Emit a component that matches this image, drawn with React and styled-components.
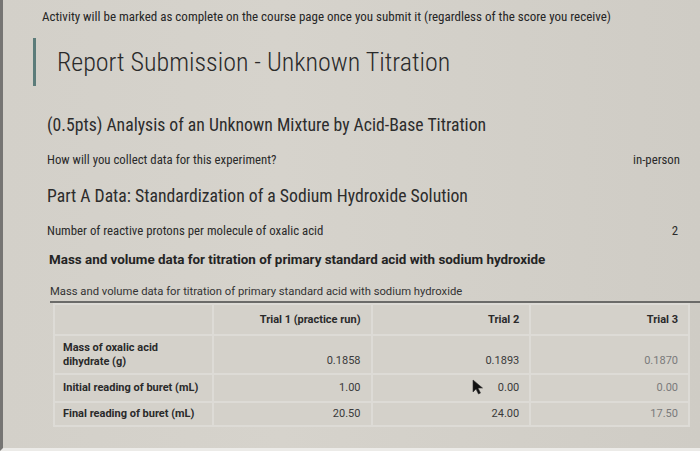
import React from "react";
import styled, { createGlobalStyle } from "styled-components";

const Global = createGlobalStyle`
  html, body { margin: 0; padding: 0; }
  body {
    width: 700px; height: 451px; overflow: hidden;
    font-family: "Roboto", "Liberation Sans", sans-serif;
    color: #2b2b2b;
  }
`;

const Screen = styled.div`
  position: relative;
  width: 700px;
  height: 451px;
  box-sizing: border-box;
  border-left: 3px solid #767573;
  border-bottom: 3px solid #ecebe8;
  background: linear-gradient(90deg, #d3d0c9 0%, #d6d3cc 40%, #cfccc5 100%);
  overflow: hidden;
`;

const Content = styled.div`
  display: flex;
  flex-direction: column;
  padding: 9px 20px 0 30px;
`;

const Notice = styled.div`
  margin-left: 9px;
  font-size: 13px;
  line-height: 16px;
  font-stretch: 85%;
  color: #262626;
`;

const TitleBlock = styled.div`
  display: flex;
  align-items: center;
  margin-top: 13px;
  height: 48px;
  border-left: 3px solid #5c7c7a;
`;

const Title = styled.h1`
  margin: 0 0 0 21px;
  font-size: 26px;
  font-weight: 300;
  font-stretch: 85%;
  color: #2a2a2a;
`;

const Heading = styled.h2`
  margin: ${p => p.$top}px 0 0 14px;
  font-size: 17.7px;
  line-height: 22px;
  font-weight: 400;
  font-stretch: 85%;
  color: #2c2c2c;
`;

const QRow = styled.div`
  display: flex;
  justify-content: space-between;
  align-items: center;
  margin: ${p => p.$top}px 0 0 14px;
  font-size: 12.8px;
  line-height: 16px;
  font-stretch: 85%;
  color: #2a2a2a;
`;

const Answer = styled.span`
  margin-right: ${p => p.$right || 0}px;
`;

const SubHeading = styled.h3`
  margin: 12px 0 0 16px;
  font-size: 13.4px;
  line-height: 18px;
  font-weight: 700;
  color: #242424;
`;

const Caption = styled.div`
  margin: 15px -20px 0 17px;
  padding-bottom: 1px;
  border-bottom: 2px solid #6b6b69;
  font-size: 11.25px;
  line-height: 16px;
  color: #333;
`;

const Table = styled.table`
  margin: 0 0 0 20px;
  width: 637px;
  border-collapse: separate;
  border-spacing: 2px;
  background: #dddbd6;
  font-size: 11px;
  table-layout: fixed;
`;

const Row = styled.tr`
  height: ${p => p.$h}px;
`;

const Cell = styled.td`
  background: #d4d1ca;
  padding: 0 ${p => (p.$label ? 8 : 10)}px ${p => (p.$bottom ? 5 : 0)}px;
  text-align: ${p => (p.$label ? "left" : "right")};
  vertical-align: ${p => (p.$bottom ? "bottom" : "middle")};
  font-weight: ${p => (p.$label ? 700 : 400)};
  color: ${p => (p.$faint ? "#7a7a7a" : p.$label ? "#2a2a2a" : "#3a3a3a")};
  line-height: 14px;
`;

const HeadCell = styled.th`
  background: #d4d1ca;
  padding: 0 10px;
  text-align: right;
  font-weight: 700;
  color: #2a2a2a;
`;

const Cursor = styled.svg`
  position: absolute;
  left: 469px;
  top: 379px;
`;

const rows = [
  { label: ["Mass of oxalic acid", "dihydrate (g)"], v: ["0.1858", "0.1893", "0.1870"], h: 37, bottom: true },
  { label: ["Initial reading of buret (mL)"], v: ["1.00", "0.00", "0.00"], h: 26 },
  { label: ["Final reading of buret (mL)"], v: ["20.50", "24.00", "17.50"], h: 22 },
];

export default function App() {
  return (
    <>
      <Global />
      <Screen>
        <Content>
          <Notice>
            Activity will be marked as complete on the course page once you submit it (regardless of the score you receive)
          </Notice>
          <TitleBlock>
            <Title>Report Submission - Unknown Titration</Title>
          </TitleBlock>
          <Heading $top={28}>(0.5pts) Analysis of an Unknown Mixture by Acid-Base Titration</Heading>
          <QRow $top={16}>
            <span>How will you collect data for this experiment?</span>
            <Answer>in-person</Answer>
          </QRow>
          <Heading $top={17}>Part A Data: Standardization of a Sodium Hydroxide Solution</Heading>
          <QRow $top={16}>
            <span>Number of reactive protons per molecule of oxalic acid</span>
            <Answer $right={2}>2</Answer>
          </QRow>
          <SubHeading>Mass and volume data for titration of primary standard acid with sodium hydroxide</SubHeading>
          <Caption>Mass and volume data for titration of primary standard acid with sodium hydroxide</Caption>
          <Table>
            <thead>
              <Row $h={29}>
                <HeadCell />
                <HeadCell>Trial 1 (practice run)</HeadCell>
                <HeadCell>Trial 2</HeadCell>
                <HeadCell>Trial 3</HeadCell>
              </Row>
            </thead>
            <tbody>
              {rows.map((r, i) => (
                <Row key={i} $h={r.h}>
                  <Cell $label>
                    {r.label.map((l, j) => (
                      <div key={j}>{l}</div>
                    ))}
                  </Cell>
                  {r.v.map((v, j) => (
                    <Cell key={j} $bottom={r.bottom} $faint={j === 2}>
                      {v}
                    </Cell>
                  ))}
                </Row>
              ))}
            </tbody>
          </Table>
        </Content>
        <Cursor width="12" height="16" viewBox="0 0 12 16">
          <path d="M1 1 L1 13 L4 10 L6.5 15 L8.5 14 L6 9 L10.5 9 Z" fill="#111" stroke="#333" strokeWidth="0.6" />
        </Cursor>
      </Screen>
    </>
  );
}
